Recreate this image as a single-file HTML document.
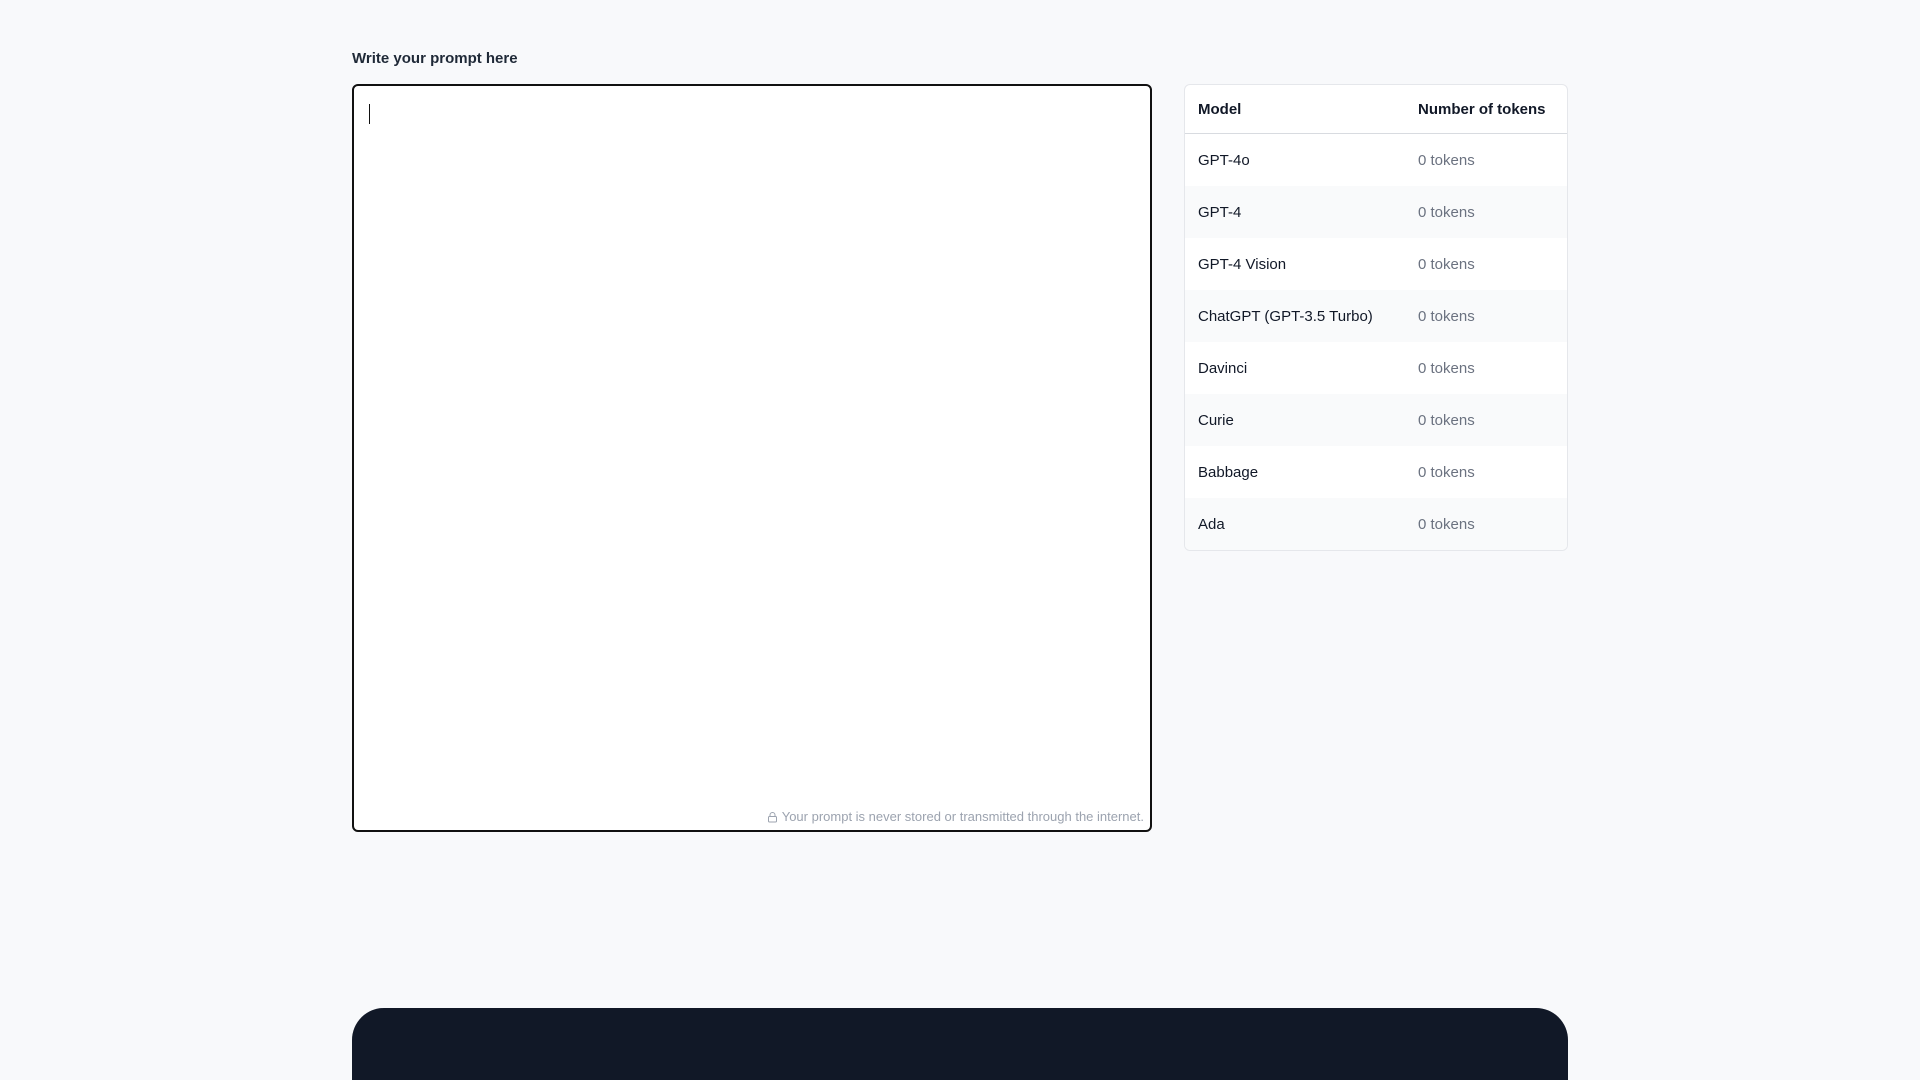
<!DOCTYPE html>
<html><head><meta charset="utf-8"><style>
*{box-sizing:border-box;margin:0;padding:0}
html,body{width:1920px;height:1080px;overflow:hidden}
body{background:#f8f9fb;font-family:"Liberation Sans",sans-serif;color:#111827;position:relative}
.lbl{position:absolute;left:352px;top:50px;font-size:15px;font-weight:bold;color:#1f2937}
.ta{position:absolute;left:352px;top:84px;width:800px;height:748px;background:#fff;border:2px solid #111;border-radius:6px}
.caret{position:absolute;left:15px;top:18px;width:1px;height:20px;background:#111}
.note{position:absolute;right:6px;bottom:6px;font-size:13px;color:#9ca3af;display:flex;align-items:center;gap:4px}
.tbl{position:absolute;left:1184px;top:84px;width:384px;height:467px;background:#fff;border:1px solid #e5e7eb;border-radius:6px;overflow:hidden}
.row{height:52px;display:flex;align-items:center;font-size:15px}
.row.h{height:49px;font-weight:bold;border-bottom:1px solid #d8dbe0}
.row:nth-child(odd):not(.h){background:#f9fafb}
.c1{width:233px;padding-left:13px}
.c2{color:#6b7280}
.h .c2{color:#111827}
.foot{position:absolute;left:352px;top:1008px;width:1216px;height:72px;background:#111827;border-radius:32px 32px 0 0}
</style></head><body>
<div class="lbl">Write your prompt here</div>
<div class="ta"><div class="caret"></div>
<div class="note"><svg width="11" height="12" viewBox="0 0 11 12"><rect x="1.5" y="5.5" width="8" height="5.5" rx="1" fill="none" stroke="#9ca3af"/><path d="M3 5.5V4a2.5 2.5 0 0 1 5 0v1.5" fill="none" stroke="#9ca3af"/></svg>Your prompt is never stored or transmitted through the internet.</div></div>
<div class="tbl">
<div class="row h"><div class="c1">Model</div><div class="c2">Number of tokens</div></div>
<div class="row"><div class="c1">GPT-4o</div><div class="c2">0 tokens</div></div>
<div class="row"><div class="c1">GPT-4</div><div class="c2">0 tokens</div></div>
<div class="row"><div class="c1">GPT-4 Vision</div><div class="c2">0 tokens</div></div>
<div class="row"><div class="c1">ChatGPT (GPT-3.5 Turbo)</div><div class="c2">0 tokens</div></div>
<div class="row"><div class="c1">Davinci</div><div class="c2">0 tokens</div></div>
<div class="row"><div class="c1">Curie</div><div class="c2">0 tokens</div></div>
<div class="row"><div class="c1">Babbage</div><div class="c2">0 tokens</div></div>
<div class="row"><div class="c1">Ada</div><div class="c2">0 tokens</div></div>
</div>
<div class="foot"></div>
</body></html>
